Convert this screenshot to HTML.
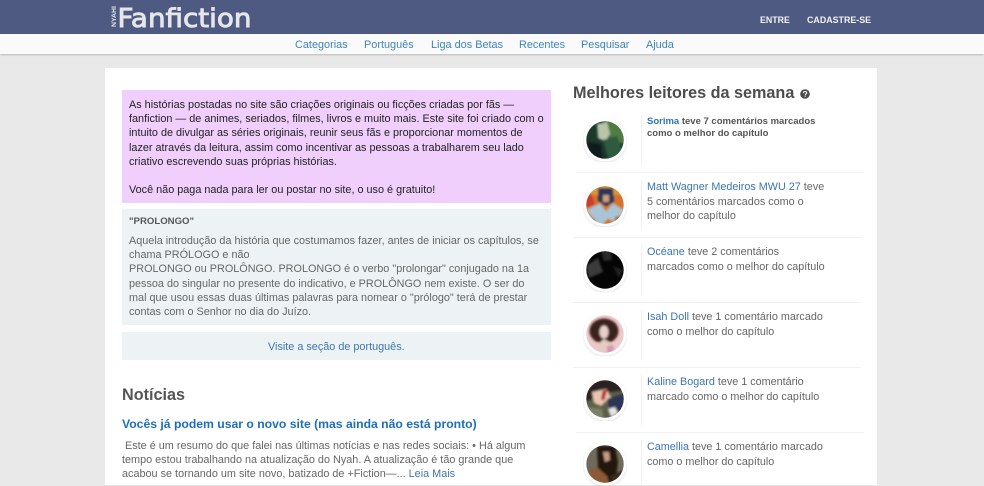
<!DOCTYPE html>
<html lang="pt"><head><meta charset="utf-8"><title>Nyah Fanfiction</title>
<style>
html,body{margin:0;padding:0}
body{width:984px;height:485px;overflow:hidden;position:relative;background:#e9e9e9;font-family:"Liberation Sans",sans-serif;color:#666}
div,a,h2,h3{position:absolute;white-space:nowrap;margin:0}
a{color:#3a76b4;text-decoration:none}
.l{font-size:10.850px;line-height:14px}
.n{font-size:10.900px;top:38px;line-height:14px;color:#3f85bd}
.t{left:647px;font-size:10.800px;line-height:14.500px;color:#666}
.t a{position:static}
.sep{height:1px;background:#f1f1f1;left:573px;width:288px}
.v{left:641px;width:1px;height:50px;background:#f1f1f1}
.av{left:583px;width:44px;height:44px}
</style></head><body>
<div style="left:0;top:0;width:984px;height:34px;background:#4e5a81"></div>
<svg style="position:absolute;left:105px;top:0" width="160" height="34">
<text x="11" y="27" transform="rotate(-90 11 27)" font-family="Liberation Sans" font-size="6.500" font-weight="bold" fill="#e3e5ea" textLength="21" lengthAdjust="spacingAndGlyphs">NYAHI</text>
<text x="12.500" y="27" font-family="DejaVu Sans" font-size="26" stroke="#e6e7ea" stroke-width=".9" fill="#e6e7ea" textLength="134" lengthAdjust="spacingAndGlyphs">Fanfiction</text>
</svg>
<div style="left:760px;top:14px;font-size:8.800px;line-height:12px;font-weight:bold;color:#f2f3f6">ENTRE</div>
<div style="left:807px;top:14px;font-size:8.900px;line-height:12px;font-weight:bold;color:#f2f3f6">CADASTRE-SE</div>
<div style="left:0;top:34px;width:984px;height:20px;background:#fafafa;box-shadow:0 1px 2px rgba(0,0,0,.2)"></div>
<a class="n" style="left:295px">Categorias</a>
<a class="n" style="left:364px">Português</a>
<a class="n" style="left:431px">Liga dos Betas</a>
<a class="n" style="left:519px">Recentes</a>
<a class="n" style="left:581px">Pesquisar</a>
<a class="n" style="left:646px">Ajuda</a>

<div style="left:105px;top:68px;width:772px;height:417px;background:#fff"></div>

<div style="left:122px;top:90px;width:429px;height:113px;background:#f1cffd"></div>
<div class="l" style="left:129px;top:98px;color:#222;line-height:14.200px">As histórias postadas no site são criações originais ou ficções criadas por fãs —<br>fanfiction — de animes, seriados, filmes, livros e muito mais. Este site foi criado com o<br>intuito de divulgar as séries originais, reunir seus fãs e proporcionar momentos de<br>lazer através da leitura, assim como incentivar as pessoas a trabalharem seu lado<br>criativo escrevendo suas próprias histórias.<br><br>Você não paga nada para ler ou postar no site, o uso é gratuito!</div>

<div style="left:122px;top:209px;width:429px;height:116px;background:#edf3f5"></div>
<div style="left:129px;top:215px;font-size:9.600px;line-height:14px;font-weight:bold;color:#555">"PROLONGO"</div>
<div class="l" style="left:129px;top:234px;color:#666;line-height:14.200px">Aquela introdução da história que costumamos fazer, antes de iniciar os capítulos, se<br>chama PRÓLOGO e não<br>PROLONGO ou PROLÔNGO. PROLONGO é o verbo "prolongar" conjugado na 1a<br>pessoa do singular no presente do indicativo, e PROLÔNGO nem existe. O ser do<br>mal que usou essas duas últimas palavras para nomear o "prólogo" terá de prestar<br>contas com o Senhor no dia do Juízo.</div>

<div style="left:122px;top:332px;width:429px;height:28px;background:#edf3f5"></div>
<a class="l" style="left:268px;top:340px;color:#3f76b0">Visite a seção de português.</a>

<h2 style="left:122px;top:385px;font-size:16.200px;line-height:21px;font-weight:bold;color:#555">Notícias</h2>
<h3 style="left:122px;top:416px;font-size:12.200px;line-height:17px;font-weight:bold;color:#1e6fb5">Vocês já podem usar o novo site (mas ainda não está pronto)</h3>
<div class="l" style="left:122px;top:439px;color:#666;line-height:14.200px">&nbsp;Este é um resumo do que falei nas últimas notícias e nas redes sociais: • Há algum<br>tempo estou trabalhando na atualização do Nyah. A atualização é tão grande que<br>acabou se tornando um site novo, batizado de +Fiction—... <a style="position:static;color:#3f76b0">Leia Mais</a></div>

<h2 style="left:573px;top:83px;font-size:16.200px;line-height:20px;font-weight:bold;color:#4d4d4d">Melhores leitores da semana</h2>
<svg style="position:absolute;left:800px;top:89px" width="10" height="10" viewBox="0 0 10 10"><circle cx="5" cy="5" r="4.800" fill="#4d4d4d"/><path d="M3.300 3.900C3.400 2.900 4.100 2.500 5 2.500c1 0 1.700.6 1.700 1.400 0 1.200-1.500 1.100-1.500 2.100" fill="none" stroke="#fff" stroke-width="1.100"/><rect x="4.600" y="6.600" width="1.200" height="1.100" fill="#fff"/></svg>

<svg width="0" height="0" style="position:absolute"><defs>
<filter id="b" x="-10%" y="-10%" width="120%" height="120%"><feGaussianBlur stdDeviation="1"/></filter>
<filter id="s" x="-20%" y="-20%" width="140%" height="140%"><feGaussianBlur stdDeviation="1.500"/></filter>
<clipPath id="c"><circle cx="22" cy="22" r="18.700"/></clipPath>
</defs></svg>

<div class="v" style="top:115px"></div>
<div class="v" style="top:180px"></div>
<div class="v" style="top:245px"></div>
<div class="v" style="top:310px"></div>
<div class="v" style="top:375px"></div>
<div class="v" style="top:440px;height:45px"></div>
<div class="sep" style="top:172px;left:576px"></div>
<div class="sep" style="top:237px"></div>
<div class="sep" style="top:302px"></div>
<div class="sep" style="top:367px"></div>
<div class="sep" style="top:432px;left:576px"></div>

<svg class="av" style="position:absolute;top:118px" viewBox="0 0 44 44"><circle cx="22" cy="23" r="21" fill="#000" opacity=".16" filter="url(#s)"/><circle cx="22" cy="22" r="21.500" fill="#fff"/><g clip-path="url(#c)"><rect width="44" height="44" fill="#1c3a2c"/><g filter="url(#b)"><path d="M20 3h22v22H30z" fill="#4f7b3f"/><path d="M14 6l10-2 3 12-4 8-8-4z" fill="#b9c4a8"/><path d="M20 22l14-4 6 16-14 8z" fill="#2f5a3c"/><path d="M4 24l14 2 2 16H8z" fill="#0d1e1c"/></g></g></svg>

<svg class="av" style="position:absolute;top:183px" viewBox="0 0 44 44"><circle cx="22" cy="23" r="21" fill="#000" opacity=".16" filter="url(#s)"/><circle cx="22" cy="22" r="21.500" fill="#fff"/><g clip-path="url(#c)"><rect width="44" height="44" fill="#d8702e"/><g filter="url(#b)"><path d="M0 0h44v12H0z" fill="#d89a3a"/><path d="M0 14l8-4 4 12-12 4z" fill="#c8402c"/><path d="M15 5h15l1 14-8 4-8-5z" fill="#2c3558"/><path d="M20 12h6v7h-6z" fill="#caa07e"/><path d="M3 27l14-7 6 8 7-8 11 7-8 13-8-4-8 8z" fill="#a9c4d6"/><path d="M4 34l8 2 2 8H6z" fill="#a8661e"/><path d="M32 34l8-2-2 10h-7z" fill="#a8661e"/></g></g></svg>

<svg class="av" style="position:absolute;top:248px" viewBox="0 0 44 44"><circle cx="22" cy="23" r="21" fill="#000" opacity=".16" filter="url(#s)"/><circle cx="22" cy="22" r="21.500" fill="#fff"/><g clip-path="url(#c)"><rect width="44" height="44" fill="#050505"/><g filter="url(#b)"><path d="M3 18l12-8 5 14-14 6z" fill="#3a3a3a"/><path d="M18 3h10l1 9-8 1z" fill="#2a2a2a"/><path d="M30 18l10 4-4 8z" fill="#222"/></g></g></svg>

<svg class="av" style="position:absolute;top:312px" viewBox="0 0 44 44"><circle cx="22" cy="23" r="21" fill="#000" opacity=".16" filter="url(#s)"/><circle cx="22" cy="22" r="21.500" fill="#fff"/><g clip-path="url(#c)"><rect width="44" height="44" fill="#eec9c9"/><g filter="url(#b)"><ellipse cx="21" cy="19" rx="14.500" ry="12.500" fill="#3a211e"/><ellipse cx="21" cy="20" rx="4.500" ry="6.500" fill="#e8d0c8"/><path d="M12 44l3-12 6-5 7 4 4 13z" fill="#e5cbc5"/><path d="M24 34l6-1 2 10h-8z" fill="#d797b0"/></g></g></svg>

<svg class="av" style="position:absolute;top:377px" viewBox="0 0 44 44"><circle cx="22" cy="23" r="21" fill="#000" opacity=".16" filter="url(#s)"/><circle cx="22" cy="22" r="21.500" fill="#fff"/><g clip-path="url(#c)"><rect width="44" height="44" fill="#5d6048"/><g filter="url(#b)"><path d="M3 3h38v10l-12 2-14-1-5 8-7 2z" fill="#2c2420"/><path d="M9 15l14-3 5 8-10 9-7-3z" fill="#e9c4b0"/><path d="M20 13l4 0-3 11-3-2z" fill="#b31a26"/><path d="M24 22l18-6v18l-14 4z" fill="#2c3454"/><path d="M25 32l7-2 3 6-7 4z" fill="#e5e5e5"/><path d="M5 30l14 2 2 12H8z" fill="#7b8268"/></g></g></svg>

<svg class="av" style="position:absolute;top:442px" viewBox="0 0 44 44"><circle cx="22" cy="23" r="21" fill="#000" opacity=".16" filter="url(#s)"/><circle cx="22" cy="22" r="21.500" fill="#fff"/><g clip-path="url(#c)"><rect width="44" height="44" fill="#6f6a5c"/><g filter="url(#b)"><path d="M14 4h18l3 16-3 22H12l3-18z" fill="#241410"/><path d="M20 10h6l1 8-5 2z" fill="#c59a85"/><path d="M3 30l12-4 9 8 3 10H6z" fill="#8d5a34"/><path d="M28 34l12-6v16H28z" fill="#3b2a22"/></g></g></svg>

<div class="t" style="top:116px;color:#555;font-weight:bold;font-size:9.500px;line-height:11.800px"><a style="color:#2a75b8">Sorima</a> teve 7 comentários marcados<br>como o melhor do capítulo</div>
<div class="t" style="top:180px"><a>Matt Wagner Medeiros MWU 27</a> teve<br>5 comentários marcados como o<br>melhor do capítulo</div>
<div class="t" style="top:245px"><a>Océane</a> teve 2 comentários<br>marcados como o melhor do capítulo</div>
<div class="t" style="top:310px"><a>Isah Doll</a> teve 1 comentário marcado<br>como o melhor do capítulo</div>
<div class="t" style="top:375px"><a>Kaline Bogard</a> teve 1 comentário<br>marcado como o melhor do capítulo</div>
<div class="t" style="top:440px"><a>Camellia</a> teve 1 comentário marcado<br>como o melhor do capítulo</div>
</body></html>
